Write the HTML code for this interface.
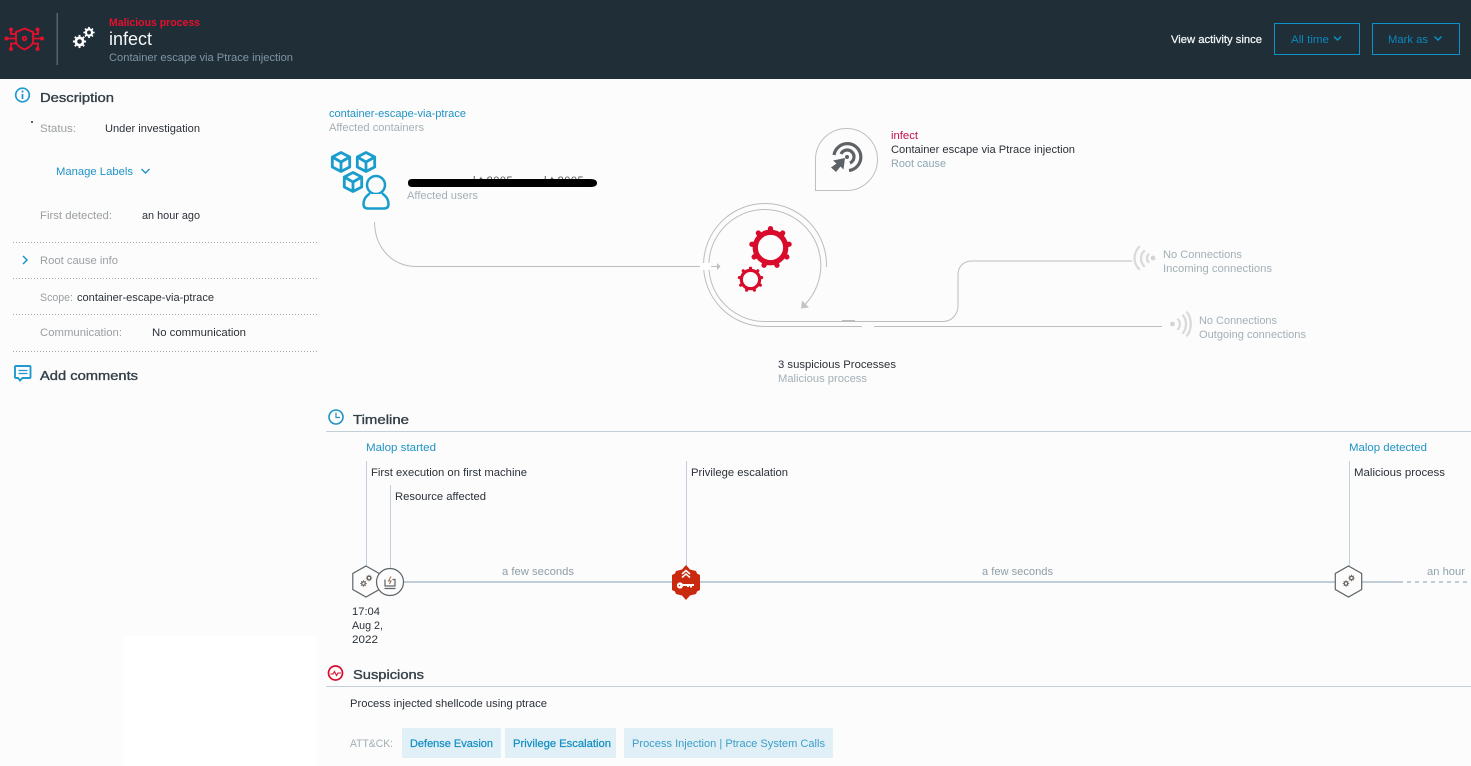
<!DOCTYPE html>
<html><head><meta charset="utf-8"><title>Malop infect</title>
<style>
html,body{margin:0;padding:0;background:#fcfcfc;width:1471px;height:766px;overflow:hidden}
svg{display:block;position:absolute;left:0;top:0}
text{font-family:"Liberation Sans",sans-serif;font-size:11px;fill:#3a424a;white-space:pre}
.g{fill:#9a9fa2}.b{fill:#1f93c4}.lg{fill:#a3b0b6}
.h{font-size:13px;fill:#343f48;stroke:#343f48;stroke-width:.35}
.d{fill:#2b3138}
.m{stroke-width:.25}
</style></head><body>
<svg width="1471" height="766" viewBox="0 0 1471 766" xmlns="http://www.w3.org/2000/svg">
<defs>
<g id="gear" fill="none" stroke="currentColor">
<circle r="14.5" stroke-width="5"/>
<g stroke-width="5" stroke-linecap="round">
<path d="M0-16V-18"/><path d="M0-16V-18" transform="rotate(40)"/><path d="M0-16V-18" transform="rotate(80)"/><path d="M0-16V-18" transform="rotate(120)"/><path d="M0-16V-18" transform="rotate(160)"/><path d="M0-16V-18" transform="rotate(200)"/><path d="M0-16V-18" transform="rotate(240)"/><path d="M0-16V-18" transform="rotate(280)"/><path d="M0-16V-18" transform="rotate(320)"/>
</g></g>
<g id="gear2" fill="none" stroke="currentColor">
<circle r="11" stroke-width="8"/>
<g stroke-width="6">
<path d="M0-13V-20"/><path d="M0-13V-20" transform="rotate(45)"/><path d="M0-13V-20" transform="rotate(90)"/><path d="M0-13V-20" transform="rotate(135)"/><path d="M0-13V-20" transform="rotate(180)"/><path d="M0-13V-20" transform="rotate(225)"/><path d="M0-13V-20" transform="rotate(270)"/><path d="M0-13V-20" transform="rotate(315)"/>
</g></g>
<g id="cube" fill="none" stroke="#1a9ccc" stroke-width="2.800" stroke-linejoin="round">
<path d="M0-9.500 8.700-5V5L0 9.500-8.700 5V-5Z"/><path d="M-8.700-5 0 0 8.700-5M0 0V9.500"/>
</g>
<g id="hex"><path d="M0-15.500 13.200-8V8L0 15.500-13.200 8V-8Z" fill="#fcfcfc" stroke="#5d6468" stroke-width="1.200"/>
<use href="#gear2" transform="translate(-2.500,2) scale(.16)" color="#6b6660"/>
<use href="#gear2" transform="translate(3,-3.500) scale(.16)" color="#6b6660"/></g>
</defs>

<rect width="1471" height="766" fill="#fcfcfc"/>
<rect x="124" y="636" width="192" height="130" fill="#fff"/>

<!-- header -->
<rect width="1471" height="79" fill="#1f2e37"/>
<g fill="none" stroke="#e5102d" stroke-width="1.800">
<path d="M24.500 28.500 33 32V41C33 45 28 48 24.500 49.500 21 48 16 45 16 41V32Z"/>
<circle cx="24.500" cy="38.500" r="1.800"/>
<path d="M16 38.500H7M16 34H11V30M33 34H38V30M33 38.500H41M16 43.500H11V48M33 43.500H38V48"/>
</g>
<g fill="#e5102d"><circle cx="6.500" cy="38.500" r="2"/><circle cx="42" cy="38.500" r="2"/><circle cx="11" cy="29.500" r="2"/><circle cx="37.500" cy="29.500" r="2"/><circle cx="11" cy="49" r="2"/><circle cx="37.500" cy="49" r="2"/></g>
<rect x="56.500" y="13" width="1.500" height="52" fill="#4f6573"/>
<use href="#gear2" transform="translate(79.500,41.500) scale(.33)" color="#fff"/>
<use href="#gear2" transform="translate(89,32.500) scale(.28)" color="#fff"/>
<text x="109" y="26" textLength="91" lengthAdjust="spacingAndGlyphs" style="font-weight:bold;fill:#e5102d">Malicious process</text>
<text x="109" y="45" textLength="43" lengthAdjust="spacingAndGlyphs" style="font-size:18px;fill:#f4f6f7">infect</text>
<text x="109" y="61" textLength="184" lengthAdjust="spacingAndGlyphs" style="fill:#7f95a5">Container escape via Ptrace injection</text>
<text class="m" x="1171" y="43" textLength="91" lengthAdjust="spacingAndGlyphs" style="fill:#f2f5f7;stroke:#f2f5f7">View activity since</text>
<rect x="1274.500" y="23.500" width="85" height="31" fill="none" stroke="#0a93c9"/>
<rect x="1372.500" y="23.500" width="87" height="31" fill="none" stroke="#0a93c9"/>
<text x="1291" y="43" textLength="38" lengthAdjust="spacingAndGlyphs" style="fill:#0d86bd">All time</text>
<text x="1388" y="43" textLength="40" lengthAdjust="spacingAndGlyphs" style="fill:#0d86bd">Mark as</text>
<path d="M1334 36.500 1337.500 40 1341 36.500M1434.500 36.500 1438 40 1441.500 36.500" fill="none" stroke="#0a93c9" stroke-width="1.400"/>

<!-- left panel -->
<circle cx="22.500" cy="95" r="6.800" fill="none" stroke="#1f9ad0" stroke-width="1.700"/>
<path d="M22.500 94V99M22.500 90.500V92.500" stroke="#1f9ad0" stroke-width="1.800"/>
<text class="h" x="40" y="102" textLength="74" lengthAdjust="spacingAndGlyphs">Description</text>
<circle cx="32" cy="122" r="1" fill="#333"/>
<text class="g" x="40" y="132" textLength="36" lengthAdjust="spacingAndGlyphs">Status:</text>
<text class="d" x="105" y="132" textLength="95" lengthAdjust="spacingAndGlyphs">Under investigation</text>
<text class="b" x="56" y="175" textLength="77" lengthAdjust="spacingAndGlyphs">Manage Labels</text>
<path d="M141.500 169 145.500 173 149.500 169" fill="none" stroke="#1f93c4" stroke-width="1.400"/>
<text class="g" x="40" y="219" textLength="72" lengthAdjust="spacingAndGlyphs">First detected:</text>
<text class="d" x="142" y="219" textLength="58" lengthAdjust="spacingAndGlyphs">an hour ago</text>
<g stroke="#a8a8a8" stroke-dasharray="1 2"><path d="M13 242.500H318M13 278.500H318M13 314.500H318M13 351.500H318"/></g>
<path d="M23 256 27 260 23 264" fill="none" stroke="#1f93c4" stroke-width="1.500"/>
<text class="g" x="40" y="264" textLength="78" lengthAdjust="spacingAndGlyphs">Root cause info</text>
<text class="g" x="40" y="301" textLength="33" lengthAdjust="spacingAndGlyphs">Scope:</text>
<text class="d" x="77" y="301" textLength="137" lengthAdjust="spacingAndGlyphs">container-escape-via-ptrace</text>
<text class="g" x="40" y="336" textLength="82" lengthAdjust="spacingAndGlyphs">Communication:</text>
<text class="d" x="152" y="336" textLength="94" lengthAdjust="spacingAndGlyphs">No communication</text>
<path d="M16 366H29.500Q30.500 366 30.500 367V377Q30.500 378 29.500 378H22.500L20 380.500 18 378H16Q15 378 15 377V367Q15 366 16 366Z" fill="none" stroke="#1f9ad0" stroke-width="1.900"/>
<path d="M18.500 370.500H27.500M18.500 373.500H27.500" stroke="#1f9ad0" stroke-width="1.200"/>
<text class="h" x="40" y="380" textLength="98" lengthAdjust="spacingAndGlyphs">Add comments</text>

<!-- affected -->
<text class="b" x="329" y="117" textLength="137" lengthAdjust="spacingAndGlyphs">container-escape-via-ptrace</text>
<text class="lg" x="329" y="131" textLength="95" lengthAdjust="spacingAndGlyphs">Affected containers</text>
<use href="#cube" transform="translate(341,162)"/>
<use href="#cube" transform="translate(366,162)"/>
<use href="#cube" transform="translate(353,182)"/>
<circle cx="376" cy="185" r="9" fill="#fcfcfc" stroke="#1a9ccc" stroke-width="2.500"/>
<path d="M369 194C365 197 363.500 200 363.500 204 363.500 207 365 208.500 368 208.500H384C387 208.500 388.500 207 388.500 204 388.500 200 387 197 383 194" fill="#fcfcfc" stroke="#1a9ccc" stroke-width="2.500" stroke-linecap="round"/>
<text x="473" y="184" style="fill:#555;letter-spacing:.5px">l t 8005</text>
<text x="544" y="184" style="fill:#555;letter-spacing:.5px">l t 8005</text>
<path d="M412 179H590Q597 179 597 183 597 187 590 187H412Q408 187 408 183 408 179 412 179Z" fill="#000"/>
<text class="lg" x="407" y="199" textLength="71" lengthAdjust="spacingAndGlyphs">Affected users</text>
<path d="M374.500 222C375 248 392 266.500 417 266.500H700" fill="none" stroke="#bcbcbc"/>

<!-- root cause -->
<path d="M815.500 190.500V159A31 31 0 1 1 846.500 190.500Z" fill="#fcfcfc" stroke="#c0c0c0"/>
<g fill="none" stroke="#5d6266" stroke-width="3.200">
<path d="M834 155A13.500 13.500 0 1 1 849 170.500"/>
<path d="M841 154A6.800 6.800 0 1 1 850 163"/>
</g>
<circle cx="847" cy="157" r="2" fill="#5d6266"/>
<path d="M833 160.500 845 158 843.500 169.500 840.500 166.500 836 172 831 167.500 836.500 163.500Z" fill="#5d6266"/>
<text x="891" y="139" textLength="27" lengthAdjust="spacingAndGlyphs" style="fill:#c4104f">infect</text>
<text class="d" x="891" y="153" textLength="184" lengthAdjust="spacingAndGlyphs">Container escape via Ptrace injection</text>
<text x="891" y="167" textLength="55" lengthAdjust="spacingAndGlyphs" style="fill:#8ba6b5">Root cause</text>

<!-- process rings -->
<g fill="none" stroke="#bdbdbd">
<path d="M826.500 267A61.500 61.500 0 1 0 765 326.500H862M874 326.500H1162"/>
<path d="M804.500 305A56 56 0 1 0 765 321.500H943C952 321.500 958 314 958 306V275C958 266 964 261 972 261H1132"/>
</g>
<path d="M801 308.500 802 300.500 809 307.500Z" fill="#c4c4c4"/>
<rect x="700" y="263" width="11" height="7" fill="#fff"/>
<path d="M711 266.500H717" stroke="#bdbdbd"/>
<path d="M717 263 720.500 266.500 717 270Z" fill="#bdbdbd"/>
<rect x="842" y="320" width="13" height="1.500" fill="#bdbdbd"/>
<use href="#gear" transform="translate(770.500,247.500) scale(1.050)" color="#d80b2c"/>
<use href="#gear" transform="translate(750.500,279.500) scale(.63)" color="#d80b2c"/>

<!-- connections -->
<g fill="none" stroke="#dadada" stroke-width="2.300" stroke-linecap="round">
<path d="M1139 247C1133 254 1133 263 1139 269"/>
<path d="M1144 251C1140 255 1140 262 1144 266"/>
<path d="M1148.500 254.500C1146.500 256 1146.500 260 1148.500 262"/>
<path d="M1178 319.500C1180.500 321 1180.500 327 1178 329"/>
<path d="M1183 315.500C1187 320 1187 328 1183 333"/>
<path d="M1187 312.500C1192 318 1192 330 1187 335.500"/>
</g>
<circle cx="1153" cy="258" r="2.400" fill="#d4d4d4"/><circle cx="1172.500" cy="324" r="2.400" fill="#d4d4d4"/>
<text class="lg" x="1163" y="258" textLength="79" lengthAdjust="spacingAndGlyphs">No Connections</text>
<text class="lg" x="1163" y="272" textLength="109" lengthAdjust="spacingAndGlyphs">Incoming connections</text>
<text class="lg" x="1199" y="324" textLength="78" lengthAdjust="spacingAndGlyphs">No Connections</text>
<text class="lg" x="1199" y="338" textLength="107" lengthAdjust="spacingAndGlyphs">Outgoing connections</text>
<text class="d" x="778" y="368" textLength="118" lengthAdjust="spacingAndGlyphs">3 suspicious Processes</text>
<text class="lg" x="778" y="382" textLength="89" lengthAdjust="spacingAndGlyphs">Malicious process</text>

<!-- timeline -->
<circle cx="336" cy="417" r="7" fill="none" stroke="#1f93c4" stroke-width="1.600"/>
<path d="M336 412.500V417.500H340" fill="none" stroke="#1f93c4" stroke-width="1.200"/>
<text class="h" x="353" y="424" textLength="56" lengthAdjust="spacingAndGlyphs">Timeline</text>
<path d="M326 431.500H1471M326 686.500H1471" stroke="#c3d0da"/>
<text class="b" x="366" y="451" textLength="70" lengthAdjust="spacingAndGlyphs">Malop started</text>
<text class="b" x="1349" y="451" textLength="78" lengthAdjust="spacingAndGlyphs">Malop detected</text>
<path d="M366.500 461V568M390.500 485V568M686.500 461V568M1349.500 461V568" stroke="#c3d0da"/>
<text class="d" x="371" y="476" textLength="156" lengthAdjust="spacingAndGlyphs">First execution on first machine</text>
<text class="d" x="395" y="500" textLength="91" lengthAdjust="spacingAndGlyphs">Resource affected</text>
<text class="d" x="691" y="476" textLength="97" lengthAdjust="spacingAndGlyphs">Privilege escalation</text>
<text class="d" x="1354" y="476" textLength="91" lengthAdjust="spacingAndGlyphs">Malicious process</text>
<path d="M404 582H1399" stroke="#c0cdd8" stroke-width="2"/>
<path d="M1399 582H1471" stroke="#c0cdd8" stroke-width="2" stroke-dasharray="4 4"/>
<text x="502" y="575" textLength="72" lengthAdjust="spacingAndGlyphs" style="fill:#8f9ea6">a few seconds</text>
<text x="982" y="575" textLength="71" lengthAdjust="spacingAndGlyphs" style="fill:#8f9ea6">a few seconds</text>
<text x="1427" y="575" textLength="38" lengthAdjust="spacingAndGlyphs" style="fill:#8fa3ae">an hour</text>
<use href="#hex" transform="translate(366,581.500)"/>
<circle cx="390" cy="582" r="13.500" fill="#fcfcfc" stroke="#5d6468" stroke-width="1.200"/>
<path d="M385 579.500V586H395V579.500H392.500M384.500 588.500H395.500" fill="none" stroke="#5d6468" stroke-width="1.200"/>
<path d="M391 576.500 388.500 581H391L389.500 584" fill="none" stroke="#a0684a" stroke-width="1"/>
<path d="M686 565 690 569.500 696 571 697 573.500 700 575V590L697 591.500 696 594 690 595.500 686 600 682 595.500 676 594 675 591.500 672 590V575L675 573.500 676 571 682 569.500Z" fill="#c9290f"/>
<path d="M682 574 686 570.500 690 574M682 577.500 686 574 690 577.500" fill="none" stroke="#fff" stroke-width="1.500"/>
<circle cx="680" cy="585.500" r="2.300" fill="#fff" stroke="#fff" stroke-width="1.600"/>
<circle cx="679.500" cy="585.500" r=".8" fill="#c9290f"/>
<path d="M683 585H694M691 585V587.500M688 585V587" fill="none" stroke="#fff" stroke-width="2"/>
<use href="#hex" transform="translate(1348.500,581.500)"/>
<text class="d" x="352" y="615" textLength="28" lengthAdjust="spacingAndGlyphs">17:04</text>
<text class="d" x="352" y="629" textLength="31" lengthAdjust="spacingAndGlyphs">Aug 2,</text>
<text class="d" x="352" y="643" textLength="26" lengthAdjust="spacingAndGlyphs">2022</text>

<!-- suspicions -->
<circle cx="335.500" cy="673" r="7" fill="none" stroke="#d80b2c" stroke-width="1.700"/>
<path d="M330.500 674H333L334.500 671.500 336.500 675.500 338 673H341" fill="none" stroke="#d80b2c" stroke-width="1.100"/>
<text class="h" x="353" y="679" textLength="71" lengthAdjust="spacingAndGlyphs">Suspicions</text>
<text class="d" x="350" y="707" textLength="197" lengthAdjust="spacingAndGlyphs">Process injected shellcode using ptrace</text>
<text x="350" y="747" textLength="43" lengthAdjust="spacingAndGlyphs" style="fill:#a2adb3">ATT&amp;CK:</text>
<rect x="402" y="728" width="99" height="30" fill="#e1f0f6"/>
<rect x="505" y="728" width="111" height="30" fill="#e1f0f6"/>
<rect x="624" y="728" width="209" height="30" fill="#e1f0f6"/>
<text class="m" x="410" y="747" textLength="83" lengthAdjust="spacingAndGlyphs" style="fill:#1690c4;stroke:#1690c4">Defense Evasion</text>
<text class="m" x="513" y="747" textLength="98" lengthAdjust="spacingAndGlyphs" style="fill:#1690c4;stroke:#1690c4">Privilege Escalation</text>
<text x="632" y="747" textLength="193" lengthAdjust="spacingAndGlyphs" style="fill:#3b9dc9">Process Injection | Ptrace System Calls</text>
</svg>
</body></html>
